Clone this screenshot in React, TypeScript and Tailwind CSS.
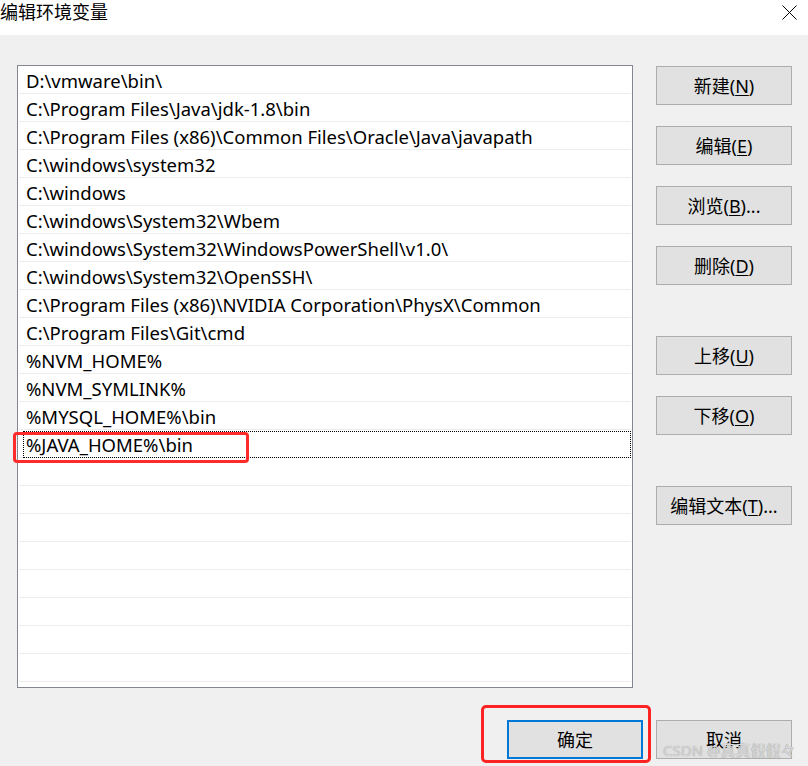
import React from "react";

const paths = [
  "D:\\vmware\\bin\\",
  "C:\\Program Files\\Java\\jdk-1.8\\bin",
  "C:\\Program Files (x86)\\Common Files\\Oracle\\Java\\javapath",
  "C:\\windows\\system32",
  "C:\\windows",
  "C:\\windows\\System32\\Wbem",
  "C:\\windows\\System32\\WindowsPowerShell\\v1.0\\",
  "C:\\windows\\System32\\OpenSSH\\",
  "C:\\Program Files (x86)\\NVIDIA Corporation\\PhysX\\Common",
  "C:\\Program Files\\Git\\cmd",
  "%NVM_HOME%",
  "%NVM_SYMLINK%",
  "%MYSQL_HOME%\\bin",
  "%JAVA_HOME%\\bin",
];

const TOTAL_ROWS = 22;
const font = { fontFamily: '"Noto Sans", "Noto Sans CJK SC", sans-serif' };

function WinButton({
  label,
  mnemonic,
  suffix = "",
  primary = false,
}: {
  label: string;
  mnemonic?: string;
  suffix?: string;
  primary?: boolean;
}) {
  return (
    <button
      type="button"
      className={
        "flex h-[39px] w-[136px] items-center justify-center bg-[#e1e1e1] text-[18px] leading-none text-black " +
        (primary ? "border-2 border-[#0078d7]" : "border border-[#adadad]")
      }
    >
      <span>
        {label}
        {mnemonic && (
          <>
            (<span className="underline underline-offset-2">{mnemonic}</span>)
          </>
        )}
        {suffix}
      </span>
    </button>
  );
}

export default function App() {
  const rows = Array.from({ length: TOTAL_ROWS }, (_, i) => paths[i] ?? "");

  return (
    <div className="h-[766px] w-[808px] overflow-hidden bg-[#f0f0f0]" style={font}>
      {/* Title bar */}
      <div className="flex h-[35px] items-start justify-between bg-white">
        <span className="text-[18px] leading-[24px] text-black">编辑环境变量</span>
        <svg className="mr-[11px] mt-[5px]" width="15" height="15" viewBox="0 0 15 15">
          <path d="M0.5 0.5 L14.5 14.5 M14.5 0.5 L0.5 14.5" stroke="#000" strokeWidth="1" />
        </svg>
      </div>

      {/* Body */}
      <div className="pl-[17px] pt-[30px]">
        <div className="flex">
          {/* List */}
          <div className="h-[623px] w-[616px] border border-[#828790] bg-white">
            {rows.map((text, i) => (
              <div
                key={i}
                className="relative mx-[1px] flex h-[28px] items-center border-b border-[#ededed] pl-[7px] pt-[3px] text-[18.5px] leading-none text-black"
              >
                {i === 13 && (
                  <>
                    <div className="pointer-events-none absolute left-[4px] right-0 top-[1px] bottom-[-1px] border border-dotted border-black" />
                    <div className="pointer-events-none absolute left-[-6px] top-[2px] h-[31px] w-[236px] rounded-[4px] border-[3px] border-[#ff2a2a]" />
                  </>
                )}
                <span className="relative">{text}</span>
              </div>
            ))}
          </div>

          {/* Right buttons */}
          <div className="ml-[23px] flex flex-col pt-[1px]">
            <div className="flex flex-col gap-[21px]">
              <WinButton label="新建" mnemonic="N" />
              <WinButton label="编辑" mnemonic="E" />
              <WinButton label="浏览" mnemonic="B" suffix="..." />
              <WinButton label="删除" mnemonic="D" />
            </div>
            <div className="mt-[51px] flex flex-col gap-[21px]">
              <WinButton label="上移" mnemonic="U" />
              <WinButton label="下移" mnemonic="O" />
            </div>
            <div className="mt-[51px]">
              <WinButton label="编辑文本" mnemonic="T" suffix="..." />
            </div>
          </div>
        </div>

        {/* Bottom buttons */}
        <div className="mt-[32px] flex w-[775px] justify-end gap-[13px]">
          <div className="relative">
            <WinButton label="确定" primary />
            <div className="pointer-events-none absolute left-[-26px] top-[-15px] h-[58px] w-[170px] rounded-[5px] border-[3px] border-[#ff2222]" />
          </div>
          <div className="relative">
            <WinButton label="取消" />
            <span
              className="pointer-events-none absolute left-[7px] top-[23px] whitespace-nowrap text-[15px] leading-none text-[#d8d8d8]"
              style={{ textShadow: "0 0 1px #8a8a8a" }}
            >
              CSDN @真真假假々
            </span>
          </div>
        </div>
      </div>
    </div>
  );
}
